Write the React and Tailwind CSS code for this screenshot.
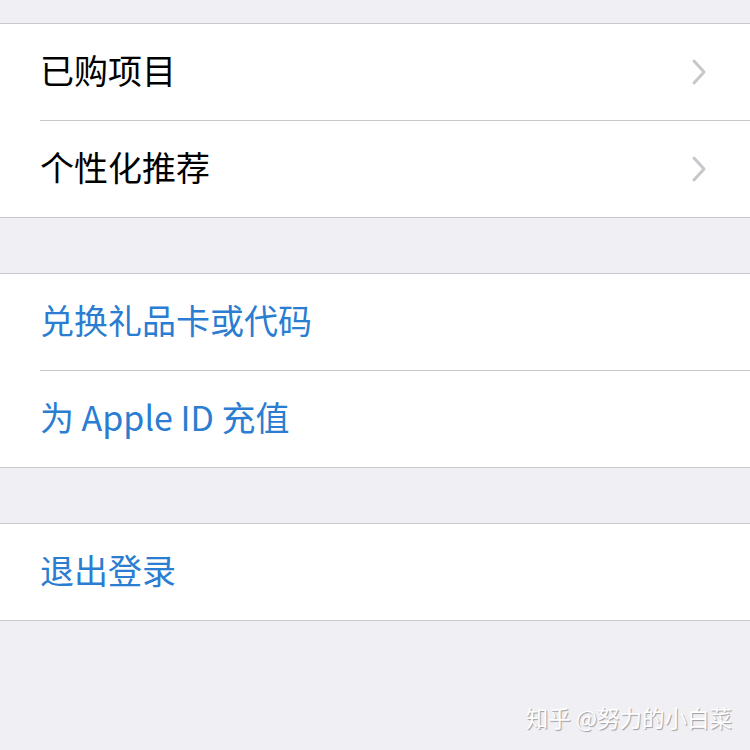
import React from "react";

const font = { fontFamily: '"Noto Sans CJK SC", "Noto Sans", sans-serif' };

function Chevron() {
  return (
    <svg width="18" height="28" viewBox="0 0 18 28" className="shrink-0 mt-[4px]">
      <polyline
        points="4,3 14,14 4,25"
        fill="none"
        stroke="#c7c7cc"
        strokeWidth="3"
        strokeLinecap="round"
        strokeLinejoin="round"
      />
    </svg>
  );
}

function Row({ label, blue, chevron, last }) {
  return (
    <div className="pl-10">
      <div
        className={`flex items-center justify-between pr-[42px] pb-[5px] ${
          last ? "h-[96px]" : "h-[97px] border-b border-[#c8c7cc]"
        }`}
      >
        <span
          className={`text-[34px] leading-none ${blue ? "text-[#2a7dd1]" : "text-black"}`}
        >
          {label}
        </span>
        {chevron && <Chevron />}
      </div>
    </div>
  );
}

function Group({ children }) {
  return (
    <div className="bg-white border-y border-[#c8c7cc]">{children}</div>
  );
}

export default function App() {
  return (
    <div
      className="w-[750px] h-[750px] bg-[#efeff4] flex flex-col overflow-hidden"
      style={font}
    >
      <div className="h-[23px] shrink-0" />
      <Group>
        <Row label="已购项目" chevron />
        <Row label="个性化推荐" chevron last />
      </Group>
      <div className="h-[55px] shrink-0" />
      <Group>
        <Row label="兑换礼品卡或代码" blue />
        <Row label="为 Apple ID 充值" blue last />
      </Group>
      <div className="h-[55px] shrink-0" />
      <Group>
        <Row label="退出登录" blue last />
      </Group>
      <div className="flex-1 flex items-end justify-end pr-[18px] pb-[22px]">
        <span
          className="text-[22.5px] leading-none text-white"
          style={{ textShadow: "1px 1px 1px rgba(0,0,0,0.35)" }}
        >
          知乎 @努力的小白菜
        </span>
      </div>
    </div>
  );
}
